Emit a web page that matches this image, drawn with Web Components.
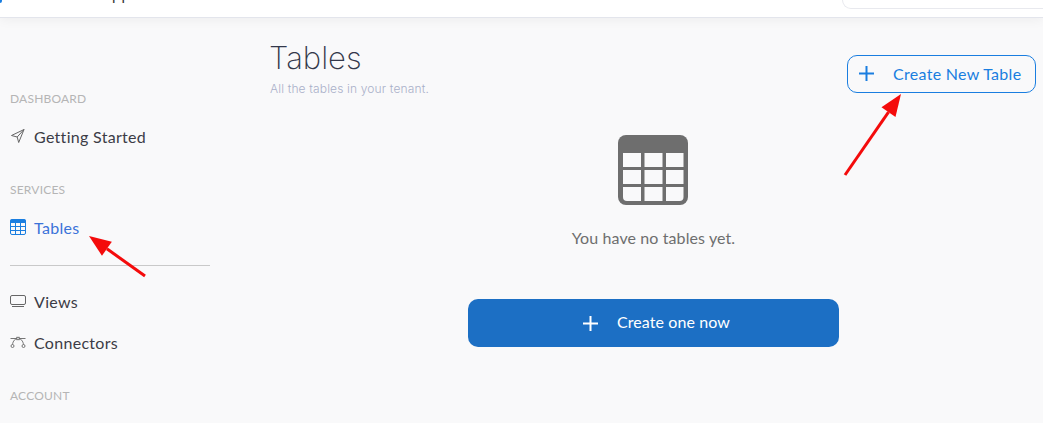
<!DOCTYPE html>
<html>
<head>
<meta charset="utf-8">
<style>
  html, body { margin: 0; height: 100%; overflow: hidden; background: #f9f9fa; }
  body { font-family: "Lato", "Noto Sans", sans-serif; }
  app-shell { width: 1043px; height: 423px; }
</style>
</head>
<body>

<app-shell>
  <top-bar slot="top"></top-bar>
  <side-nav slot="side">
    <nav-heading>DASHBOARD</nav-heading>
    <nav-item icon="send">Getting Started</nav-item>
    <nav-heading>SERVICES</nav-heading>
    <nav-item icon="table" active>Tables</nav-item>
    <nav-rule></nav-rule>
    <nav-item icon="monitor">Views</nav-item>
    <nav-item icon="curve">Connectors</nav-item>
    <nav-heading>ACCOUNT</nav-heading>
  </side-nav>
  <tables-page slot="main"></tables-page>
  <red-arrow x1="145" y1="276" x2="89" y2="236"></red-arrow>
  <red-arrow x1="845" y1="175" x2="901" y2="94"></red-arrow>
</app-shell>

<script>
  const plusIcon = `<svg width="15" height="15" viewBox="0 0 15 15" fill="none" stroke="currentColor" stroke-width="2"><path d="M7.500 0v15M0 7.500h15"/></svg>`;

  const navIcons = {
    send: `<svg width="16" height="16" viewBox="0 0 16 16" fill="none" stroke="#666" stroke-width="1"><path d="M14 1.500 1.500 7.500l5.700 1.500 1.500 5.500z M14 1.500 7.200 9"/></svg>`,
    table: `<svg width="16" height="16" viewBox="0 0 16 16"><rect x=".5" y=".5" width="15" height="15" rx="1.500" fill="none" stroke="#1a7ee0"/><rect x=".5" y=".5" width="15" height="3.500" fill="#1a7ee0"/><path d="M1 7.500h14M1 11.500h14M5.500 4v11M10.500 4v11" stroke="#1a7ee0" fill="none"/></svg>`,
    monitor: `<svg width="16" height="16" viewBox="0 0 16 16" fill="none" stroke="#666"><rect x=".5" y="2.500" width="15" height="9" rx="1.500"/><path d="M2 13.500h12"/></svg>`,
    curve: `<svg width="16" height="16" viewBox="0 0 16 16" fill="none" stroke="#666" stroke-width=".9"><circle cx="2.500" cy="12" r="1.500"/><circle cx="13.500" cy="12" r="1.500"/><path d="M2.500 10.500C3 7 5 4.500 8 4.500s5 2.500 5.500 6"/><path d="M.5 4.500h15"/><rect x="6.800" y="3.300" width="2.400" height="2.400" fill="#f9f9fa"/></svg>`
  };

  class AppShell extends HTMLElement {
    constructor() {
      super();
      this.attachShadow({mode: "open"}).innerHTML = `<style>
        :host { display: grid; grid-template-columns: 240px 1fr; grid-template-rows: 18px 1fr; position: relative; overflow: hidden; }
        ::slotted([slot=top]) { grid-column: 1 / 3; }
      </style>
      <slot name="top"></slot><slot name="side"></slot><slot name="main"></slot><slot></slot>`;
    }
  }

  class TopBar extends HTMLElement {
    constructor() {
      super();
      this.attachShadow({mode: "open"}).innerHTML = `<style>
        :host { display: flex; justify-content: space-between; background: #fff; border-bottom: 1px solid #e3e5ec; box-shadow: 0 2px 12px rgba(0,0,0,.05); box-sizing: border-box; height: 18px; position: relative; z-index: 1; }
        .brand { width: 2px; height: 3px; background: #1a7ee0; border-radius: 0 0 2px 0; }
        .clip { position: absolute; inset: 0; overflow: hidden; }
        .word { position: absolute; left: 112px; top: -15px; font: 15px "Lato", sans-serif; color: #333; letter-spacing: 1px; }
        .search { box-sizing: border-box; width: 250px; height: 9px; margin-right: -49px; border: 1px solid #e8e9ee; border-top: 0; border-radius: 0 0 10px 10px; }
      </style><div class="brand"></div><div class="clip"><span class="word">pp</span></div><div class="search"></div>`;
    }
  }

  class SideNav extends HTMLElement {
    constructor() {
      super();
      this.attachShadow({mode: "open"}).innerHTML = `<style>
        :host { display: block; padding: 73px 30px 0 10px; }
      </style><slot></slot>`;
    }
  }

  class NavHeading extends HTMLElement {
    constructor() {
      super();
      this.attachShadow({mode: "open"}).innerHTML = `<style>
        :host { display: block; font: 12px/16px "Lato", sans-serif; letter-spacing: .2px; color: #b5b5b5; margin-bottom: 9px; }
        :host(:not(:first-child)) { margin-top: 25px; }
      </style><slot></slot>`;
    }
  }

  class NavItem extends HTMLElement {
    constructor() {
      super();
      const active = this.hasAttribute("active");
      this.attachShadow({mode: "open"}).innerHTML = `<style>
        :host { display: flex; align-items: center; gap: 8px; height: 41px; font: 16px "Lato", sans-serif; letter-spacing: .3px; color: ${active ? "#3b73d9" : "#3c3c46"}; }
        .i { display: block; height: 16px; margin-top: -1px; }
        svg { display: block; }
      </style><span class="i">${navIcons[this.getAttribute("icon")]}</span><slot></slot>`;
    }
  }

  class NavRule extends HTMLElement {
    constructor() {
      super();
      this.attachShadow({mode: "open"}).innerHTML = `<style>
        :host { display: block; height: 1px; background: #c9c9c9; margin: 17px 0 15px; }
      </style>`;
    }
  }

  class TablesPage extends HTMLElement {
    constructor() {
      super();
      this.attachShadow({mode: "open"}).innerHTML = `<style>
        :host { display: block; padding: 23px 7px 0 30px; }
        .head { display: flex; justify-content: space-between; align-items: flex-start; }
        h1 { margin: 0 0 0 -1px; font: 200 31px/34px "Inter", sans-serif; color: #33384a; }
        p { margin: 7px 0 0; font: 300 12px/14px "Inter", sans-serif; letter-spacing: .15px; color: #a9b0c9; }
        .outline { margin-top: 14px; }
        .empty { display: flex; flex-direction: column; align-items: center; margin: 39px 197px 0 198px; }
        .empty svg { margin-left: -2px; }
        .msg { margin: 23px 0 51px; font: 16px/20px "Lato", sans-serif; letter-spacing: .1px; color: #6e6e6e; }
      </style>
      <div class="head">
        <div><h1>Tables</h1><p>All the tables in your tenant.</p></div>
        <action-button class="outline" variant="outline">Create New Table</action-button>
      </div>
      <div class="empty">
        <svg width="70" height="70" viewBox="0 0 70 70">
          <rect width="70" height="70" rx="8" fill="#6e6e6e"/>
          <g fill="#f9f9fa">
            <rect x="5" y="18" width="18" height="14"/><rect x="26.500" y="18" width="18" height="14"/><rect x="48" y="18" width="17.500" height="14"/>
            <rect x="5" y="35" width="18" height="14"/><rect x="26.500" y="35" width="18" height="14"/><rect x="48" y="35" width="17.500" height="14"/>
            <path d="M5 52h18v14H9q-4 0-4-4z"/><rect x="26.500" y="52" width="18" height="14"/><path d="M48 52h17.500v10q0 4-4 4H48z"/>
          </g>
        </svg>
        <div class="msg">You have no tables yet.</div>
        <action-button variant="solid">Create one now</action-button>
      </div>`;
    }
  }

  class ActionButton extends HTMLElement {
    constructor() {
      super();
      this.attachShadow({mode: "open"}).innerHTML = `<style>
        :host { display: flex; align-items: center; box-sizing: border-box; font: 16px "Lato", sans-serif; white-space: nowrap; }
        :host([variant=outline]) { width: 189px; height: 38px; padding: 0 0 2px 11px; gap: 19px; border: 1px solid #1a7ee0; border-radius: 10px; color: #1a7ee0; letter-spacing: .3px; }
        :host([variant=solid]) { width: 371px; height: 48px; justify-content: center; padding-left: 6px; gap: 19px; background: #1c6fc4; border-radius: 10px; color: #fff; letter-spacing: .1px; }
        :host([variant=solid]) .label { margin-top: -3px; }
        svg { display: block; flex: none; }
      </style>${plusIcon}<span class="label"><slot></slot></span>`;
    }
  }

  class RedArrow extends HTMLElement {
    constructor() {
      super();
      const [x1, y1, x2, y2] = ["x1", "y1", "x2", "y2"].map(a => +this.getAttribute(a));
      const a = Math.atan2(y2 - y1, x2 - x1), n = a + Math.PI / 2;
      const bx = x2 - 22 * Math.cos(a), by = y2 - 22 * Math.sin(a);
      const p = (d) => `${bx + d * Math.cos(n)},${by + d * Math.sin(n)}`;
      this.attachShadow({mode: "open"}).innerHTML = `<style>
        :host { position: absolute; inset: 0; pointer-events: none; }
      </style>
      <svg width="1043" height="423"><line x1="${x1}" y1="${y1}" x2="${bx}" y2="${by}" stroke="#f40b0b" stroke-width="3"/><polygon points="${x2},${y2} ${p(8.500)} ${p(-8.500)}" fill="#f40b0b"/></svg>`;
    }
  }

  customElements.define("app-shell", AppShell);
  customElements.define("top-bar", TopBar);
  customElements.define("side-nav", SideNav);
  customElements.define("nav-heading", NavHeading);
  customElements.define("nav-item", NavItem);
  customElements.define("nav-rule", NavRule);
  customElements.define("tables-page", TablesPage);
  customElements.define("action-button", ActionButton);
  customElements.define("red-arrow", RedArrow);
</script>
</body>
</html>
